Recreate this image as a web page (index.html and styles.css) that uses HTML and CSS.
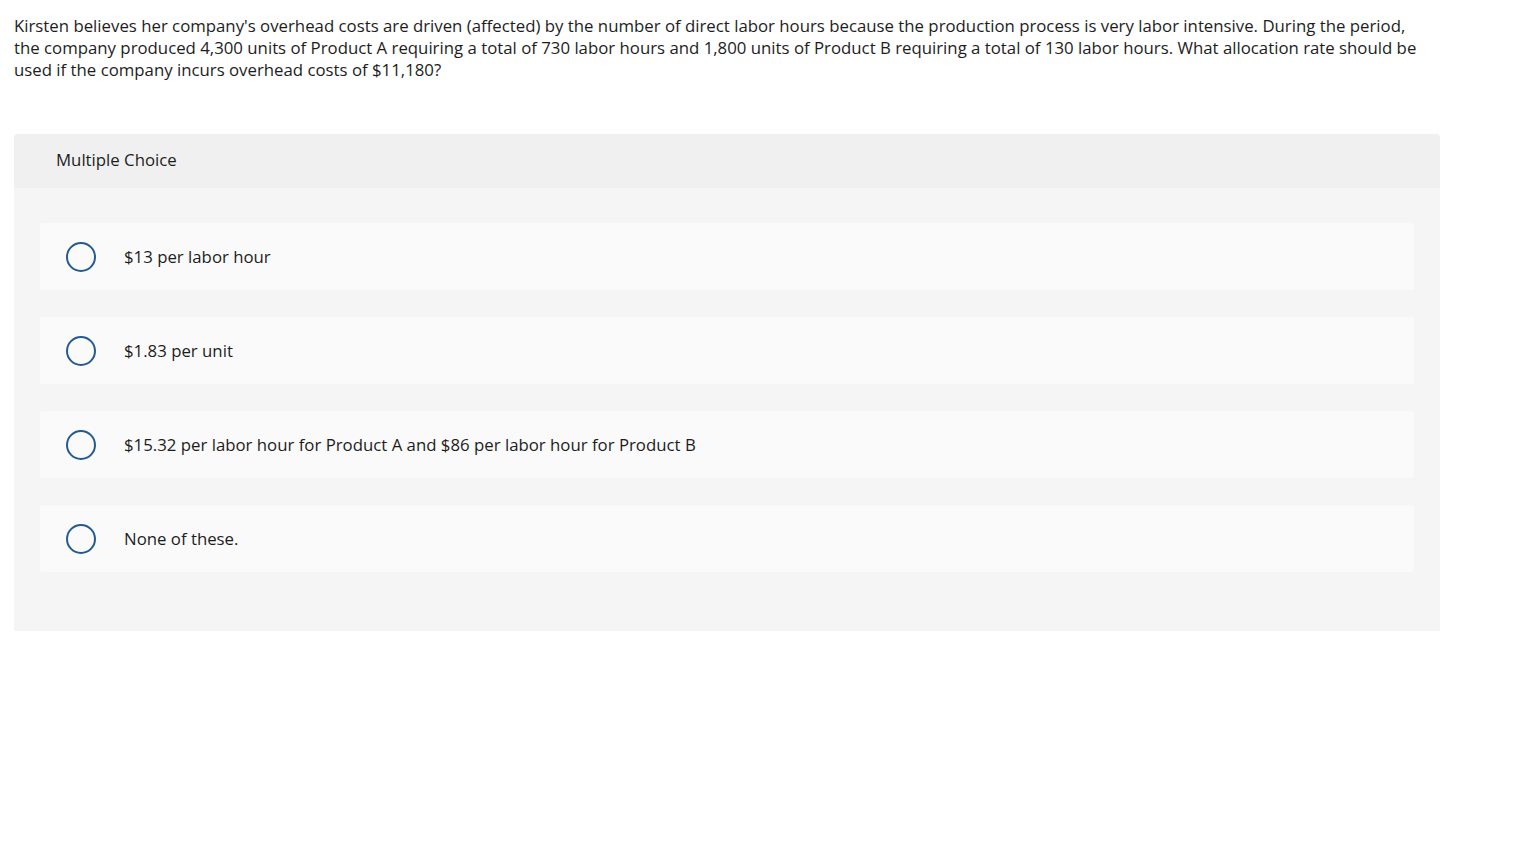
FILE: index.html
```html
<!DOCTYPE html>
<html lang="en">

<head>
  <meta charset="UTF-8" />
  <meta name="viewport" content="width=device-width, initial-scale=1.0" />
  <title>Multiple Choice</title>
  <link rel="stylesheet" href="styles.css">
</head>

<body>
  <div class="pergunta">
    <p class="enunciado">Kirsten believes her company's overhead costs are driven (affected) by the number of direct labor hours because the production process is very labor intensive. During the period, the company produced 4,300 units of Product A requiring a total of 730 labor hours and 1,800 units of Product B requiring a total of 130 labor hours. What allocation rate should be used if the company incurs overhead costs of $11,180?</p>

    <div class="painel">
      <div class="painel-topo">Multiple Choice</div>
      <div class="opcoes">
        <label class="opcao">
          <span class="radio"></span>
          <span class="opcao-texto">$13 per labor hour</span>
        </label>
        <label class="opcao">
          <span class="radio"></span>
          <span class="opcao-texto">$1.83 per unit</span>
        </label>
        <label class="opcao">
          <span class="radio"></span>
          <span class="opcao-texto">$15.32 per labor hour for Product A and $86 per labor hour for Product B</span>
        </label>
        <label class="opcao">
          <span class="radio"></span>
          <span class="opcao-texto">None of these.</span>
        </label>
      </div>
    </div>
  </div>
</body>

</html>
```

FILE: styles.css
```css
body,
html {
  margin: 0;
  padding: 0;
  background-color: #fff;
  color: #1d1d1d;
  font-family: 'Open Sans', 'Lato', sans-serif;
}

.pergunta {
  width: 1426px;
  padding: 15px 14px;
}

.enunciado {
  margin: 0;
  max-width: 1410px;
  font-size: 16.8px;
  line-height: 22px;
}

.painel {
  margin-top: 53px;
  background-color: #f5f5f5;
  border-radius: 4px 4px 0 0;
}

.painel-topo {
  height: 54px;
  display: flex;
  align-items: center;
  padding-left: 42px;
  padding-bottom: 3px;
  box-sizing: border-box;
  background-color: #f0f0f0;
  border-radius: 4px 4px 0 0;
  font-size: 16.8px;
}

.opcoes {
  display: flex;
  flex-direction: column;
  gap: 27px;
  padding: 35px 26px 59px;
}

.opcao {
  height: 67px;
  display: flex;
  align-items: center;
  background-color: #fafafa;
  border-radius: 3px;
  cursor: pointer;
}

.radio {
  width: 26px;
  height: 26px;
  margin-left: 26px;
  margin-right: 28px;
  border: 2px solid #235a93;
  border-radius: 50%;
  flex-shrink: 0;
}

.opcao-texto {
  font-size: 16.8px;
  padding-bottom: 1px;
}
```
